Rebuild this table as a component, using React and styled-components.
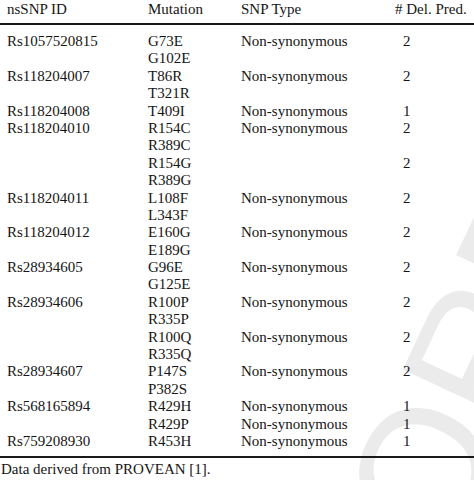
import React from "react";
import styled, { createGlobalStyle } from "styled-components";

const GlobalStyle = createGlobalStyle`
  html, body { margin: 0; padding: 0; background: #ffffff; }
  body { font-family: "Liberation Serif", "Times New Roman", serif; color: #151515; }
`;

const Page = styled.div`
  position: relative;
  width: 474px;
  height: 480px;
  overflow: hidden;
  background: #ffffff;
  font-size: 15px;
  line-height: 17.39px;
`;

const Watermark = styled.div`
  position: absolute;
  left: ${(p) => p.$x}px;
  top: ${(p) => p.$y}px;
  transform-origin: 0 0;
  transform: rotate(${(p) => p.$angle}deg);
  font-family: "Liberation Sans", Arial, sans-serif;
  font-size: 175px;
  line-height: 1;
  white-space: nowrap;
  color: #ebebeb;
  pointer-events: none;
  z-index: 0;
`;

const Table = styled.div`
  position: relative;
  z-index: 1;
`;

const Row = styled.div`
  display: grid;
  grid-template-columns: 141px 93px 154px 1fr;
  padding-left: 7px;
`;

const HeaderRow = styled(Row)`
  padding-top: 1px;
  height: 22px;
  border-bottom: 2px solid #1a1a1a;
  box-sizing: content-box;
`;

const Body = styled.div`
  padding: 8px 0 6px;
  border-bottom: 2px solid #1a1a1a;
`;

const Cell = styled.div`
  white-space: nowrap;
  padding-left: ${(p) => (p.$num ? "8px" : "0")};
`;

const MutList = styled.div`
  display: flex;
  flex-direction: column;
`;

const Footer = styled.div`
  padding: 2.5px 0 0 1px;
`;

const data = [
  { id: "Rs1057520815", subs: [{ m: ["G73E", "G102E"], t: "Non-synonymous", p: "2" }] },
  { id: "Rs118204007", subs: [{ m: ["T86R", "T321R"], t: "Non-synonymous", p: "2" }] },
  { id: "Rs118204008", subs: [{ m: ["T409I"], t: "Non-synonymous", p: "1" }] },
  {
    id: "Rs118204010",
    subs: [
      { m: ["R154C", "R389C"], t: "Non-synonymous", p: "2" },
      { m: ["R154G", "R389G"], t: "", p: "2" },
    ],
  },
  { id: "Rs118204011", subs: [{ m: ["L108F", "L343F"], t: "Non-synonymous", p: "2" }] },
  { id: "Rs118204012", subs: [{ m: ["E160G", "E189G"], t: "Non-synonymous", p: "2" }] },
  { id: "Rs28934605", subs: [{ m: ["G96E", "G125E"], t: "Non-synonymous", p: "2" }] },
  {
    id: "Rs28934606",
    subs: [
      { m: ["R100P", "R335P"], t: "Non-synonymous", p: "2" },
      { m: ["R100Q", "R335Q"], t: "Non-synonymous", p: "2" },
    ],
  },
  { id: "Rs28934607", subs: [{ m: ["P147S", "P382S"], t: "Non-synonymous", p: "2" }] },
  {
    id: "Rs568165894",
    subs: [
      { m: ["R429H"], t: "Non-synonymous", p: "1" },
      { m: ["R429P"], t: "Non-synonymous", p: "1" },
    ],
  },
  { id: "Rs759208930", subs: [{ m: ["R453H"], t: "Non-synonymous", p: "1" }] },
];

export default function App() {
  return (
    <>
      <GlobalStyle />
      <Page>
        <Watermark $x={154} $y={838} $angle={-65}>UNCORRECTED PROOF</Watermark>
        <Table>
          <HeaderRow>
            <Cell>nsSNP ID</Cell>
            <Cell>Mutation</Cell>
            <Cell>SNP Type</Cell>
            <Cell># Del. Pred.</Cell>
          </HeaderRow>
          <Body>
            {data.map((g) =>
              g.subs.map((s, i) => (
                <Row key={g.id + i}>
                  <Cell>{i === 0 ? g.id : ""}</Cell>
                  <MutList>
                    {s.m.map((m) => (
                      <Cell key={m}>{m}</Cell>
                    ))}
                  </MutList>
                  <Cell>{s.t}</Cell>
                  <Cell $num>{s.p}</Cell>
                </Row>
              ))
            )}
          </Body>
          <Footer>Data derived from PROVEAN [1].</Footer>
        </Table>
      </Page>
    </>
  );
}
